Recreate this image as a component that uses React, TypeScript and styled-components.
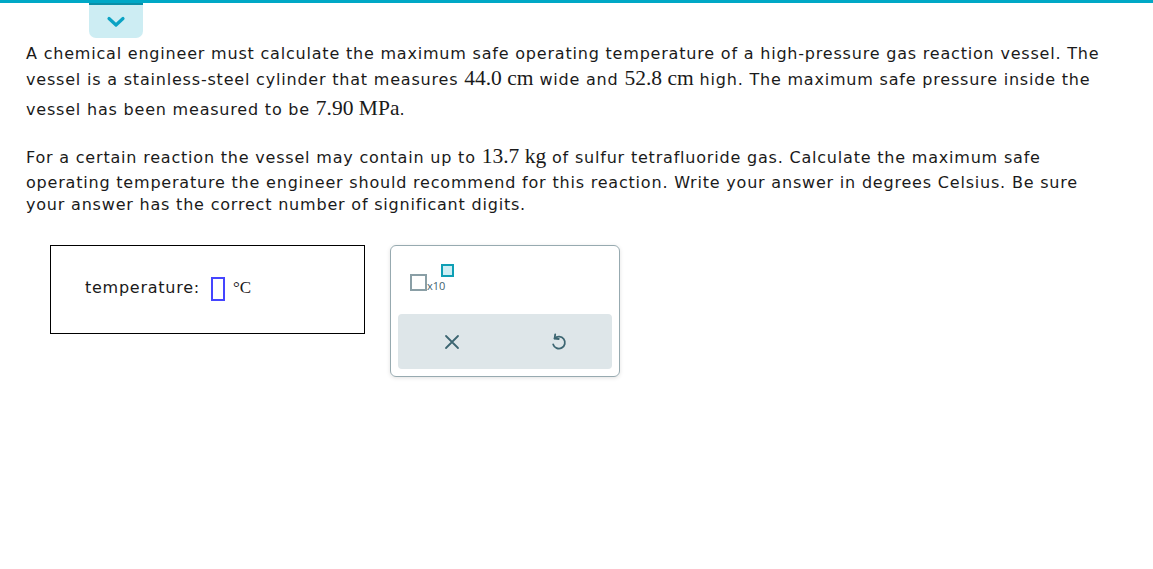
import React from "react";
import styled, { createGlobalStyle } from "styled-components";

const GlobalStyle = createGlobalStyle`
  html, body {
    margin: 0;
    padding: 0;
    background: #fff;
  }
  body {
    font-family: "DejaVu Sans", Verdana, sans-serif;
    color: #1a1a1a;
  }
`;

const Page = styled.div`
  width: 1153px;
  height: 569px;
  border-top: 3px solid #00a8c6;
  box-sizing: border-box;
  overflow: hidden;
`;

const TabRow = styled.div`
  display: flex;
  padding-left: 89px;
`;

const CollapseTab = styled.div`
  width: 54px;
  height: 35px;
  background: #cdedf3;
  border-top: 2px solid #0a8fa8;
  border-radius: 0 0 7px 7px;
  box-sizing: border-box;
  display: flex;
  align-items: center;
  justify-content: center;
`;

const Content = styled.div`
  padding: 2px 0 0 26px;
`;

const Paragraph = styled.div<{ $gap: number }>`
  margin-top: ${({ $gap }) => $gap}px;
  font-size: 16px;
  letter-spacing: 0.8px;
`;

const Line = styled.div<{ $h: number }>`
  height: ${({ $h }) => $h}px;
  line-height: ${({ $h }) => $h}px;
  white-space: nowrap;
`;

const Math = styled.span`
  font-family: "Liberation Serif", "Times New Roman", serif;
  font-size: 21.5px;
  line-height: 1;
  letter-spacing: 0;
`;

const WorkRow = styled.div`
  display: flex;
  align-items: flex-start;
  gap: 25px;
  margin-top: 31px;
  padding-left: 24px;
`;

const AnswerBox = styled.div`
  width: 315px;
  height: 89px;
  border: 1px solid #000;
  box-sizing: border-box;
  display: flex;
  align-items: center;
  padding: 0 0 4px 34px;
  font-size: 16px;
`;

const Label = styled.span`
  letter-spacing: 0.75px;
  margin-right: 11px;
`;

const InputSlot = styled.span`
  display: inline-block;
  box-sizing: border-box;
  width: 14px;
  height: 24px;
  border: 2px solid #4545ff;
  margin-right: 8px;
  margin-top: 2px;
`;

const Unit = styled.span`
  font-family: "Liberation Serif", "Times New Roman", serif;
  font-size: 17px;
`;

const ToolPanel = styled.div`
  width: 230px;
  height: 132px;
  border: 1px solid #97aab0;
  border-radius: 6px;
  box-sizing: border-box;
  box-shadow: 0 1px 4px rgba(0, 0, 0, 0.12);
  padding: 18px 7px 7px 7px;
  display: flex;
  flex-direction: column;
  justify-content: space-between;
`;

const SciNote = styled.div`
  display: flex;
  align-items: flex-end;
  padding-left: 12px;
  height: 28px;
`;

const BaseSquare = styled.span`
  display: inline-block;
  width: 13px;
  height: 13px;
  border: 2px solid #8a9fa6;
  margin-bottom: 1px;
`;

const Times = styled.span`
  font-family: "Open Sans", sans-serif;
  font-size: 11px;
  color: #42646f;
  line-height: 1;
  margin-bottom: 1px;
`;

const ExpSquare = styled.span`
  display: inline-block;
  width: 9px;
  height: 9px;
  border: 2px solid #0e9fb5;
  background: #cdeef4;
  align-self: flex-start;
  margin-left: -4px;
`;

const ButtonBar = styled.div`
  height: 55px;
  background: #dee6e9;
  border-radius: 4px;
  display: flex;
  align-items: center;
  justify-content: space-around;
`;

const IconButton = styled.button`
  border: none;
  background: transparent;
  padding: 0;
  display: flex;
  align-items: center;
  justify-content: center;
  width: 30px;
  height: 30px;
`;

export default function App() {
  return (
    <>
      <GlobalStyle />
      <Page>
        <TabRow>
          <CollapseTab>
            <svg width="22" height="14" viewBox="0 0 22 14">
              <path
                d="M4 3.5 L11 10 L18 3.5"
                fill="none"
                stroke="#0ba3c4"
                strokeWidth="3.2"
                strokeLinecap="round"
                strokeLinejoin="round"
              />
            </svg>
          </CollapseTab>
        </TabRow>
        <Content>
          <Paragraph $gap={0}>
            <Line $h={27}>
              A chemical engineer must calculate the maximum safe operating
              temperature of a high-pressure gas reaction vessel. The
            </Line>
            <Line $h={26}>
              vessel is a stainless-steel cylinder that measures{" "}
              <Math>44.0 cm</Math> wide and <Math>52.8 cm</Math> high. The
              maximum safe pressure inside the
            </Line>
            <Line $h={34}>
              vessel has been measured to be <Math>7.90 MPa</Math>.
            </Line>
          </Paragraph>
          <Paragraph $gap={18}>
            <Line $h={25}>
              For a certain reaction the vessel may contain up to{" "}
              <Math>13.7 kg</Math> of sulfur tetrafluoride gas. Calculate the
              maximum safe
            </Line>
            <Line $h={26}>
              operating temperature the engineer should recommend for this
              reaction. Write your answer in degrees Celsius. Be sure
            </Line>
            <Line $h={18}>
              your answer has the correct number of significant digits.
            </Line>
          </Paragraph>
          <WorkRow>
            <AnswerBox>
              <Label>temperature:</Label>
              <InputSlot />
              <Unit>°C</Unit>
            </AnswerBox>
            <ToolPanel>
              <SciNote>
                <BaseSquare />
                <Times>x10</Times>
                <ExpSquare />
              </SciNote>
              <ButtonBar>
                <IconButton aria-label="clear">
                  <svg width="16" height="16" viewBox="0 0 16 16">
                    <path
                      d="M2 2 L14 14 M14 2 L2 14"
                      stroke="#3d6672"
                      strokeWidth="1.8"
                      strokeLinecap="round"
                    />
                  </svg>
                </IconButton>
                <IconButton aria-label="undo">
                  <svg width="20" height="20" viewBox="0 0 20 20">
                    <path
                      d="M5.6 6.4 A6 6 0 1 1 4.2 12.4"
                      fill="none"
                      stroke="#3d6672"
                      strokeWidth="1.8"
                      strokeLinecap="round"
                    />
                    <path
                      d="M6.2 2.4 L5.6 6.6 L9.8 7"
                      fill="none"
                      stroke="#3d6672"
                      strokeWidth="1.8"
                      strokeLinecap="round"
                      strokeLinejoin="round"
                    />
                  </svg>
                </IconButton>
              </ButtonBar>
            </ToolPanel>
          </WorkRow>
        </Content>
      </Page>
    </>
  );
}
